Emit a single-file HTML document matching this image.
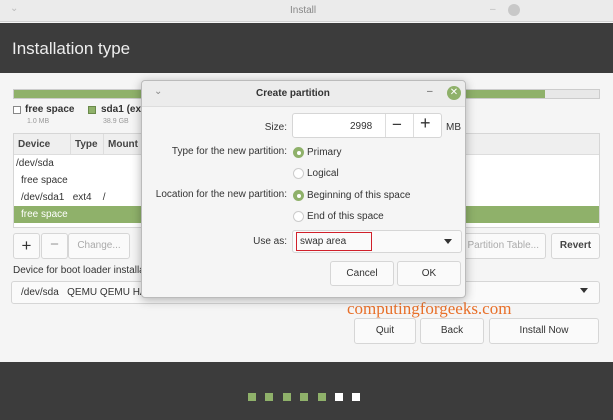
<!DOCTYPE html><html><head><meta charset="utf-8"><style>
*{box-sizing:border-box;margin:0;padding:0}
body{width:613px;height:420px;overflow:hidden;background:#f5f5f5;font-family:"Liberation Sans","DejaVu Sans",sans-serif;font-size:10px;color:#333;position:relative}
.a{position:absolute}
.btn{position:absolute;background:#fafafa;border:1px solid #d6d6d6;border-radius:3px;text-align:center;color:#333}
.lab{position:absolute;right:326px;text-align:right;color:#333}
.rad{position:absolute;width:11px;height:11px;border-radius:50%;border:1px solid #ccc;background:#fff;left:293px}
.rad.on{background:#8fb16a;border-color:#8fb16a}
.rad.on:after{content:"";position:absolute;left:2.5px;top:2.5px;width:4px;height:4px;border-radius:50%;background:#fff}
.rt{position:absolute;left:307px}
.sq{position:absolute;top:393px;width:8px;height:8px;background:#8fb16a}
</style></head><body>
<div class="a" style="left:0;top:0;width:613px;height:22px;background:#ebebeb;border-bottom:1px solid #d0d0d0"></div>
<div class="a" style="left:290px;top:5px;color:#888">Install</div>
<div class="a" style="left:10px;top:3px;color:#bbb">⌄</div>
<div class="a" style="left:490px;top:4px;color:#bbb">–</div>
<div class="a" style="left:508px;top:4px;width:12px;height:12px;border-radius:50%;background:#c8c8c8"></div>
<div class="a" style="left:0;top:23px;width:613px;height:50px;background:#3c3c3c"></div>
<div class="a" style="left:12px;top:39px;font-size:17px;color:#eee">Installation type</div>
<div class="a" style="left:13px;top:89px;width:587px;height:10px;background:#e8e8e8;border:1px solid #ccc"></div>
<div class="a" style="left:14px;top:90px;width:531px;height:8px;background:#8fb16a"></div>
<div class="a" style="left:13px;top:106px;width:8px;height:8px;border:1px solid #888;background:#fff"></div>
<div class="a" style="left:25px;top:104px;font-weight:bold">free space</div>
<div class="a" style="left:27px;top:118px;font-size:7px;color:#999">1.0 MB</div>
<div class="a" style="left:88px;top:106px;width:8px;height:8px;border:1px solid #6a8a4a;background:#8fb16a"></div>
<div class="a" style="left:101px;top:104px;font-weight:bold">sda1 (ex</div>
<div class="a" style="left:103px;top:118px;font-size:7px;color:#999">38.9 GB</div>
<div class="a" style="left:13px;top:133px;width:587px;height:95px;background:#fff;border:1px solid #d6d6d6"></div>
<div class="a" style="left:14px;top:134px;width:585px;height:21px;background:#efefef;border-bottom:1px solid #ddd"></div>
<div class="a" style="left:70px;top:134px;width:1px;height:21px;background:#ddd"></div>
<div class="a" style="left:103px;top:134px;width:1px;height:21px;background:#ddd"></div>
<div class="a" style="left:18px;top:139px;font-weight:bold;color:#444">Device</div>
<div class="a" style="left:75px;top:139px;font-weight:bold;color:#444">Type</div>
<div class="a" style="left:108px;top:139px;font-weight:bold;color:#444">Mount</div>
<div class="a" style="left:16px;top:158px">/dev/sda</div>
<div class="a" style="left:21px;top:175px">free space</div>
<div class="a" style="left:21px;top:192px">/dev/sda1&nbsp;&nbsp;&nbsp;ext4&nbsp;&nbsp;&nbsp;&nbsp;/</div>
<div class="a" style="left:14px;top:206px;width:585px;height:17px;background:#8fb16a"></div>
<div class="a" style="left:21px;top:209px;color:#fff">free space</div>
<div class="btn" style="left:13px;top:233px;width:27px;height:26px;font-size:17px;line-height:23px">+</div>
<div class="btn" style="left:41px;top:233px;width:27px;height:26px;font-size:15px;line-height:22px;color:#999">−</div>
<div class="btn" style="left:68px;top:233px;width:62px;height:26px;line-height:24px;color:#aaa">Change...</div>
<div class="btn" style="left:440px;top:233px;width:106px;height:26px;line-height:24px;color:#aaa;text-align:right;padding-right:6px">Partition Table...</div>
<div class="btn" style="left:551px;top:233px;width:49px;height:26px;line-height:24px;font-weight:bold;color:#444">Revert</div>
<div class="a" style="left:13px;top:265px">Device for boot loader installation:</div>
<div class="btn" style="left:11px;top:281px;width:589px;height:23px;text-align:left;padding:5px 9px">/dev/sda&nbsp;&nbsp;&nbsp;QEMU QEMU HARDDISK (42.9 GB)</div>
<div class="a" style="left:580px;top:288px;border:4px solid transparent;border-top:5px solid #333;border-bottom:0"></div>
<div class="a" style="left:347px;top:299px;font-family:'Liberation Serif',serif;font-size:17px;color:#e8702a">computingforgeeks.com</div>
<div class="btn" style="left:354px;top:318px;width:62px;height:26px;line-height:24px">Quit</div>
<div class="btn" style="left:420px;top:318px;width:64px;height:26px;line-height:24px">Back</div>
<div class="btn" style="left:489px;top:318px;width:110px;height:26px;line-height:24px">Install Now</div>
<div class="a" style="left:0;top:362px;width:613px;height:58px;background:#3c3c3c"></div>
<div class="sq" style="left:248px"></div><div class="sq" style="left:265px"></div><div class="sq" style="left:283px"></div><div class="sq" style="left:300px"></div><div class="sq" style="left:318px"></div><div class="sq" style="left:335px;background:#fff"></div><div class="sq" style="left:352px;background:#fff"></div>
<div class="a" style="left:141px;top:80px;width:325px;height:218px;background:#f5f5f5;border:1px solid #bbb;border-radius:4px;box-shadow:0 2px 10px rgba(0,0,0,.3)"></div>
<div class="a" style="left:142px;top:81px;width:323px;height:26px;background:#ececec;border-radius:4px 4px 0 0;border-bottom:1px solid #ddd"></div>
<div class="a" style="left:154px;top:86px;color:#888">⌄</div>
<div class="a" style="left:256px;top:88px;font-weight:bold;color:#333">Create partition</div>
<div class="a" style="left:427px;top:86px;color:#555">–</div>
<div class="a" style="left:447px;top:86px;width:14px;height:14px;border-radius:50%;background:#8fb16a;color:#fff;font-size:10px;line-height:14px;text-align:center">✕</div>
<div class="lab" style="top:122px">Size:</div>
<div class="btn" style="left:292px;top:113px;width:150px;height:25px;background:#fff"></div>
<div class="a" style="left:350px;top:121px">2998</div>
<div class="a" style="left:385px;top:114px;width:1px;height:23px;background:#ddd"></div>
<div class="a" style="left:413px;top:114px;width:1px;height:23px;background:#ddd"></div>
<div class="a" style="left:392px;top:115px;font-size:17px">−</div>
<div class="a" style="left:420px;top:113px;font-size:18px">+</div>
<div class="a" style="left:446px;top:122px">MB</div>
<div class="lab" style="top:146px">Type for the new partition:</div>
<div class="rad on" style="top:147px"></div><div class="rt" style="top:147px">Primary</div>
<div class="rad" style="top:168px"></div><div class="rt" style="top:168px">Logical</div>
<div class="lab" style="top:189px">Location for the new partition:</div>
<div class="rad on" style="top:190px"></div><div class="rt" style="top:190px">Beginning of this space</div>
<div class="rad" style="top:211px"></div><div class="rt" style="top:211px">End of this space</div>
<div class="lab" style="top:236px">Use as:</div>
<div class="btn" style="left:292px;top:230px;width:170px;height:23px"></div>
<div class="a" style="left:296px;top:232px;width:76px;height:19px;border:1.5px solid #d0202a;padding:3px 3px;color:#333">swap area</div>
<div class="a" style="left:444px;top:239px;border:4px solid transparent;border-top:5px solid #333;border-bottom:0"></div>
<div class="btn" style="left:330px;top:261px;width:64px;height:25px;line-height:23px">Cancel</div>
<div class="btn" style="left:397px;top:261px;width:64px;height:25px;line-height:23px">OK</div>
</body></html>
